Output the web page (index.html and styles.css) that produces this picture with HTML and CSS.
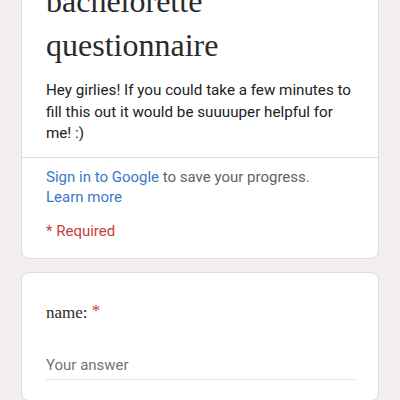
FILE: index.html
```html
<!DOCTYPE html>
<html lang="en">
<head>
  <meta charset="UTF-8">
  <title>bachelorette questionnaire</title>
  <link rel="stylesheet" href="styles.css">
</head>
<body>
  <div class="form">
    <div class="card header-card">
      <div class="header-top">
        <h1 class="form-title">bachelorette questionnaire</h1>
        <p class="form-desc">Hey girlies! If you could take a few minutes to fill this out it would be suuuuper helpful for me! :)</p>
      </div>
      <div class="header-bottom">
        <p class="signin"><a href="#">Sign in to Google</a> to save your progress. <a class="learn" href="#">Learn more</a></p>
        <p class="required">* Required</p>
      </div>
    </div>

    <div class="card question">
      <div class="q-title">name: <span class="star">*</span></div>
      <div class="answer">Your answer</div>
    </div>
  </div>
</body>
</html>
```

FILE: styles.css
```css
body {
  margin: 0;
  background: #f4eeee;
  font-family: Roboto, "Liberation Sans", sans-serif;
  color: #202124;
}
.form {
  padding: 0 21px;
}
.card {
  background: #fff;
  border: 1px solid #dfdcdc;
  border-radius: 8px;
  margin-bottom: 13px;
}
.header-card {
  margin-top: -21px;
  border-top: none;
  border-top-left-radius: 0;
  border-top-right-radius: 0;
}
.header-top {
  padding: 0 24px 12px;
  border-bottom: 1px solid #dadce0;
}
.form-title {
  margin: 0;
  font-family: "Liberation Serif", serif;
  font-weight: normal;
  font-size: 32px;
  line-height: 44px;
  color: #2a2a2a;
}
.form-desc {
  margin: 13px 0 0;
  font-size: 15.2px;
  line-height: 21.5px;
}
.header-bottom {
  padding: 9px 24px 17px;
}
.signin {
  margin: 0;
  font-size: 15px;
  line-height: 20px;
  color: #5f6368;
}
.signin a {
  color: #3a78c9;
  text-decoration: none;
}
.signin .learn {
  display: block;
}
.required {
  margin: 14px 0 0;
  font-size: 15px;
  line-height: 20px;
  color: #c5403a;
}
.question {
  padding: 26px 24px 20px;
}
.q-title {
  font-family: "Liberation Serif", serif;
  font-size: 17px;
  line-height: 24px;
  color: #2a2a2a;
}
.star {
  color: #c5403a;
  vertical-align: 2px;
}
.answer {
  margin-top: 30px;
  width: 309px;
  padding-bottom: 4px;
  border-bottom: 1px solid #e0e0e0;
  font-size: 15px;
  line-height: 20px;
  color: #70757a;
}
```
